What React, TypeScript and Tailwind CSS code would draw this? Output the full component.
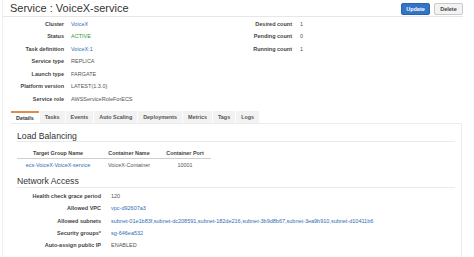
const details = [
  { label: "Cluster", value: "VoiceX", kind: "link" },
  { label: "Status", value: "ACTIVE", kind: "ok" },
  { label: "Task definition", value: "VoiceX:1", kind: "link" },
  { label: "Service type", value: "REPLICA" },
  { label: "Launch type", value: "FARGATE" },
  { label: "Platform version", value: "LATEST(1.3.0)" },
  { label: "Service role", value: "AWSServiceRoleForECS" },
];

const counts = [
  { label: "Desired count", value: "1" },
  { label: "Pending count", value: "0" },
  { label: "Running count", value: "1" },
];

const tabs = ["Details", "Tasks", "Events", "Auto Scaling", "Deployments", "Metrics", "Tags", "Logs"];

const network = [
  { label: "Health check grace period", value: "120" },
  { label: "Allowed VPC", value: "vpc-d92607a3", kind: "link" },
  {
    label: "Allowed subnets",
    value:
      "subnet-01e1b83f,subnet-dc208591,subnet-182de216,subnet-3b9d8b67,subnet-3ea9b910,subnet-d10411b6",
    kind: "link",
  },
  { label: "Security groups*", value: "sg-646ea532", kind: "link" },
  { label: "Auto-assign public IP", value: "ENABLED" },
];

function valueColor(kind?: string) {
  if (kind === "link") return "text-[#2f6db5]";
  if (kind === "ok") return "text-[#2f9a33]";
  return "text-[#555]";
}

export default function App() {
  return (
    <div className="w-[474px] h-[257px] overflow-hidden bg-white font-['Liberation_Sans',Arial,sans-serif]">
      <div className="ml-[2px] w-[461px] min-h-[257px] border-l border-[#efefef]">
        {/* header */}
        <div className="flex h-[17px] items-start justify-between border-b border-[#e6e6e6] pl-[7px]">
          <h1 className="mt-[2px] text-[11px] leading-[13px] text-[#333]">Service : VoiceX-service</h1>
          <div className="mt-[3px] flex gap-[4px]">
            <button className="h-[12px] w-[29px] rounded-[2px] border border-[#2a63ad] bg-[#3274c6] text-[5.5px] font-bold leading-[10px] text-white">
              Update
            </button>
            <button className="h-[12px] w-[29px] rounded-[2px] border border-[#c9c9c9] bg-[#f3f3f3] text-[5.5px] font-bold leading-[10px] text-[#444]">
              Delete
            </button>
          </div>
        </div>

        {/* summary */}
        <div className="flex pt-[0.75px] text-[5.5px]">
          <div className="grid w-[217px] grid-cols-[61px_1fr] gap-x-[7px]">
            {details.map((d) => (
              <div key={d.label} className="contents">
                <div className="h-[12.5px] text-right font-bold leading-[12.5px] text-[#444]">{d.label}</div>
                <div className={`h-[12.5px] leading-[12.5px] ${valueColor(d.kind)}`}>{d.value}</div>
              </div>
            ))}
          </div>
          <div className="grid h-fit grid-cols-[72px_auto] gap-x-[8px]">
            {counts.map((c) => (
              <div key={c.label} className="contents">
                <div className="h-[12.5px] text-right font-bold leading-[12.5px] text-[#444]">{c.label}</div>
                <div className="h-[12.5px] leading-[12.5px] text-[#555]">{c.value}</div>
              </div>
            ))}
          </div>
        </div>

        {/* tabs */}
        <div className="ml-[8px] mt-[5.75px] flex h-[12px] w-fit bg-[#f2f2f2] text-[5.4px] font-bold">
          {tabs.map((t, i) => (
            <div
              key={t}
              className={
                i === 0
                  ? "border-t-2 border-[#e38b4c] bg-white px-[5px] leading-[10px] text-[#333]"
                  : "border-l border-white px-[5px] leading-[12px] text-[#555]"
              }
            >
              {t}
            </div>
          ))}
        </div>

        {/* panel */}
        <div className="ml-[8px] mr-[1px] h-[140px] border-r border-t border-[#ececec] px-[6px]">
          <div className="h-[18px] border-b border-[#eaeaea] pt-[7px] text-[8.7px] leading-[11px] text-[#333]">
            Load Balancing
          </div>

          <div className="w-[194px] text-[5.4px]">
            <div className="grid h-[17px] grid-cols-[82px_60px_52px] border-b border-[#cfcfcf] pt-[8px] text-center font-bold leading-[7px] text-[#444]">
              <div>Target Group Name</div>
              <div>Container Name</div>
              <div>Container Port</div>
            </div>
            <div className="grid h-[10px] grid-cols-[82px_60px_52px] pt-[3px] text-center leading-[7px] text-[#555]">
              <div className="text-[#2f6db5]">ecs-VoiceX-VoiceX-service</div>
              <div>VoiceX-Container</div>
              <div>10001</div>
            </div>
          </div>

          <div className="h-[19px] border-b border-[#eaeaea] pt-[7px] text-[8.7px] leading-[11px] text-[#333]">
            Network Access
          </div>

          <div className="grid grid-cols-[84px_1fr] gap-x-[10px] pt-[2px] text-[5.5px]">
            {network.map((n) => (
              <div key={n.label} className="contents">
                <div className="h-[12.25px] whitespace-nowrap text-right font-bold leading-[12.25px] text-[#444]">
                  {n.label}
                </div>
                <div className={`h-[12.25px] whitespace-nowrap leading-[12.25px] ${valueColor(n.kind)}`}>
                  {n.value}
                </div>
              </div>
            ))}
          </div>
        </div>
      </div>
    </div>
  );
}
